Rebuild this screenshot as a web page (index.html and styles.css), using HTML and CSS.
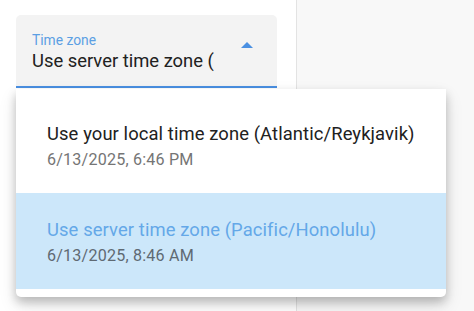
FILE: index.html
```html
<!DOCTYPE html>
<html lang="en">
<head>
  <meta charset="UTF-8" />
  <meta name="viewport" content="width=device-width, initial-scale=1" />
  <title>Time zone</title>
  <link rel="stylesheet" href="styles.css">
</head>
<body>
  <div class="page">
    <div class="left">
      <div class="field">
        <div class="field-text">
          <label class="label">Time zone</label>
          <div class="value">Use server time zone (</div>
        </div>
        <svg class="caret" width="12" height="6" viewBox="0 0 12 6">
          <path d="M0 6 L6 0 L12 6 Z" fill="#4a90e2" />
        </svg>
      </div>
    </div>
    <div class="right"></div>
  </div>

  <ul class="menu">
    <li class="item">
      <div class="item-title">Use your local time zone (Atlantic/Reykjavik)</div>
      <div class="item-sub">6/13/2025, 6:46 PM</div>
    </li>
    <li class="item selected">
      <div class="item-title">Use server time zone (Pacific/Honolulu)</div>
      <div class="item-sub">6/13/2025, 8:46 AM</div>
    </li>
  </ul>
</body>
</html>
```

FILE: styles.css
```css
body {
  font-family: Roboto, "Noto Sans", sans-serif;
  background: #f8f8f8;
  color: #212121;
  margin: 0;
  padding: 0;
}
.page {
  display: flex;
  height: 311px;
}
.left {
  width: 297px;
  background: white;
  border-right: 1px solid #e3e3e3;
  padding: 15px 0 0 16px;
  box-sizing: border-box;
}
.right {
  flex: 1;
  background: #f8f8f8;
}
.field {
  width: 261px;
  height: 73px;
  background: #f3f3f3;
  border-radius: 5px 5px 0 0;
  border-bottom: 2px solid #4a90e2;
  box-sizing: border-box;
  display: flex;
  align-items: center;
  padding: 0 24px 0 16px;
}
.field-text {
  flex: 1;
  overflow: hidden;
  padding-top: 3px;
}
.label {
  display: block;
  font-size: 13.8px;
  color: #5b9fe3;
  line-height: 17px;
}
.value {
  font-size: 18.4px;
  line-height: 23px;
  white-space: nowrap;
  overflow: hidden;
}
.caret {
  margin-left: 8px;
  margin-top: -12px;
}
.menu {
  position: absolute;
  left: 16px;
  top: 89px;
  width: 430px;
  margin: 0;
  padding: 8px 0;
  list-style: none;
  background: white;
  border-radius: 0 0 5px 5px;
  box-shadow: 0 5px 10px rgba(0,0,0,0.2), 0 8px 18px rgba(0,0,0,0.12);
}
.item {
  height: 96px;
  padding: 4px 31px 0;
  box-sizing: border-box;
  display: flex;
  flex-direction: column;
  justify-content: center;
}
.item-title {
  font-size: 18.4px;
  line-height: 26px;
  letter-spacing: 0.1px;
}
.item-sub {
  font-size: 16.1px;
  line-height: 26px;
  letter-spacing: 0.2px;
  color: #757575;
}
.selected {
  background: #cce7fa;
}
.selected .item-title {
  color: #64a8e8;
}
.selected .item-sub {
  color: #5f6a73;
}
```
